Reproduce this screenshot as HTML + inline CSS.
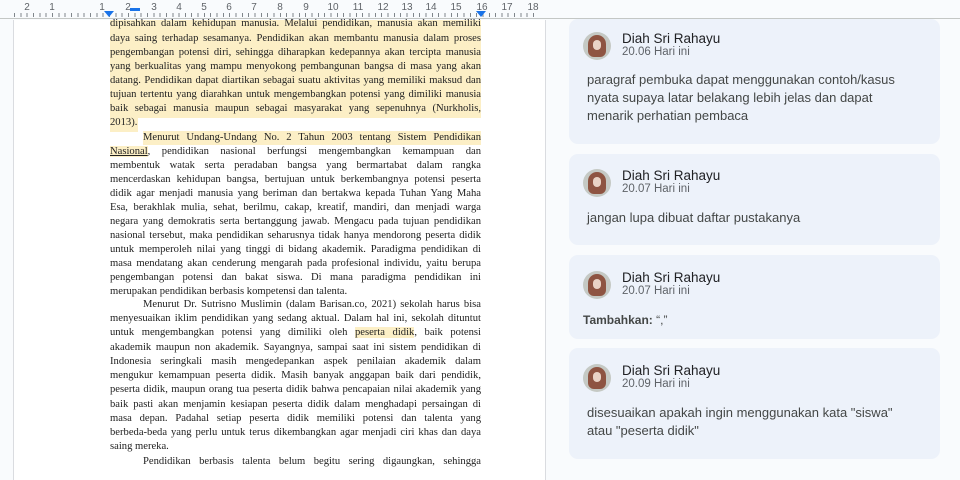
<!DOCTYPE html>
<html><head><meta charset="utf-8"><style>
*{margin:0;padding:0;box-sizing:border-box}
body{width:960px;height:472px;overflow:hidden;background:#f9fbfd;position:relative;font-family:"Liberation Serif",serif}
.ruler{position:absolute;left:0;top:0;width:960px;height:19px;background:#f9fbfd;border-bottom:1px solid #c4c7c5}
.ticks{position:absolute;left:14px;top:13px;width:521px;height:4px;background:repeating-linear-gradient(90deg,#80868b 0 1px,transparent 1px 6.33px)}
.num{position:absolute;top:2px;font:10px "Liberation Sans",sans-serif;color:#5f6368;transform:translateX(-50%);background:#f9fbfd;padding:0 1px}
.page{position:absolute;left:13px;top:20px;width:533px;height:460px;background:#fff;border-left:1px solid #dadce0;border-right:1px solid #dadce0}
.l{position:absolute;left:110px;width:371px;font-size:10.6px;line-height:14px;height:14px;color:#222;text-align:justify;text-align-last:justify;white-space:nowrap;overflow:visible}
.l.e{text-align-last:left}
.hs{background:#fcefc6}
.card{position:absolute;left:569px;width:371px;background:#edf2fa;border-radius:9px;font-family:"Liberation Sans",sans-serif}
.av{position:absolute;left:14px;width:28px;height:28px;border-radius:50%;background:#c5c9c4;overflow:hidden}
.av:before{content:"";position:absolute;left:5px;top:3px;width:18px;height:22px;border-radius:9px 9px 6px 6px;background:#8e5442}
.av:after{content:"";position:absolute;left:10px;top:8px;width:8px;height:10px;border-radius:4px;background:#e9d3c6}
.nm{position:absolute;left:53px;font-size:13.5px;color:#202124}
.tm{position:absolute;left:53px;font-size:11.5px;color:#5f6368}
.bd{position:absolute;left:18px;font-size:13px;line-height:18px;color:#444746}
</style></head><body>
<div class="page"></div>
<div class="ruler">
<div class="ticks"></div>
<span class="num" style="left:27px">2</span><span class="num" style="left:52px">1</span>
<span class="num" style="left:102px">1</span><span class="num" style="left:128px">2</span><span class="num" style="left:154px">3</span><span class="num" style="left:179px">4</span><span class="num" style="left:204px">5</span><span class="num" style="left:229px">6</span><span class="num" style="left:254px">7</span><span class="num" style="left:280px">8</span><span class="num" style="left:306px">9</span><span class="num" style="left:333px">10</span><span class="num" style="left:358px">11</span><span class="num" style="left:383px">12</span><span class="num" style="left:407px">13</span><span class="num" style="left:431px">14</span><span class="num" style="left:456px">15</span><span class="num" style="left:482px">16</span><span class="num" style="left:507px">17</span><span class="num" style="left:533px">18</span>
<div style="position:absolute;left:104px;top:11px;width:0;height:0;border-left:5px solid transparent;border-right:5px solid transparent;border-top:6px solid #1a73e8"></div>
<div style="position:absolute;left:476px;top:11px;width:0;height:0;border-left:5px solid transparent;border-right:5px solid transparent;border-top:6px solid #1a73e8"></div>
<div style="position:absolute;left:130px;top:8px;width:10px;height:3px;background:#1a73e8"></div>
</div>
<div style="position:absolute;left:110px;top:20px;width:371px;height:98px;background:#fcefc6"></div>
<div style="position:absolute;left:110px;top:118px;width:28px;height:14px;background:#fcefc6"></div>
<div style="position:absolute;left:143px;top:131px;width:338px;height:14px;background:#fcefc6"></div>
<div class="l" style="top:17px">dipisahkan dalam kehidupan manusia. Melalui pendidikan, manusia akan memiliki</div>
<div class="l" style="top:32px">daya saing terhadap sesamanya. Pendidikan akan membantu manusia dalam proses</div>
<div class="l" style="top:46px">pengembangan potensi diri, sehingga diharapkan kedepannya akan tercipta manusia</div>
<div class="l" style="top:60px">yang berkualitas yang mampu menyokong pembangunan bangsa di masa yang akan</div>
<div class="l" style="top:74px">datang. Pendidikan dapat diartikan sebagai suatu aktivitas yang memiliki maksud dan</div>
<div class="l" style="top:88px">tujuan tertentu yang diarahkan untuk mengembangkan potensi yang dimiliki manusia</div>
<div class="l" style="top:102px">baik sebagai manusia maupun sebagai masyarakat yang sepenuhnya (Nurkholis,</div>
<div class="l e" style="top:116px">2013).</div>
<div class="l" style="top:131px;left:143px;width:338px">Menurut Undang-Undang No. 2 Tahun 2003 tentang Sistem Pendidikan</div>
<div class="l" style="top:145px"><span class="hs" style="text-decoration:underline">Nasional</span>, pendidikan nasional berfungsi mengembangkan kemampuan dan</div>
<div class="l" style="top:159px">membentuk watak serta peradaban bangsa yang bermartabat dalam rangka</div>
<div class="l" style="top:173px">mencerdaskan kehidupan bangsa, bertujuan untuk berkembangnya potensi peserta</div>
<div class="l" style="top:187px">didik agar menjadi manusia yang beriman dan bertakwa kepada Tuhan Yang Maha</div>
<div class="l" style="top:201px">Esa, berakhlak mulia, sehat, berilmu, cakap, kreatif, mandiri, dan menjadi warga</div>
<div class="l" style="top:215px">negara yang demokratis serta bertanggung jawab. Mengacu pada tujuan pendidikan</div>
<div class="l" style="top:229px">nasional tersebut, maka pendidikan seharusnya tidak hanya mendorong peserta didik</div>
<div class="l" style="top:243px">untuk memperoleh nilai yang tinggi di bidang akademik. Paradigma pendidikan di</div>
<div class="l" style="top:257px">masa mendatang akan cenderung mengarah pada profesional individu, yaitu berupa</div>
<div class="l" style="top:271px">pengembangan potensi dan bakat siswa. Di mana paradigma pendidikan ini</div>
<div class="l e" style="top:285px">merupakan pendidikan berbasis kompetensi dan talenta.</div>
<div class="l" style="top:298px;left:143px;width:338px">Menurut Dr. Sutrisno Muslimin (dalam Barisan.co, 2021) sekolah harus bisa</div>
<div class="l" style="top:312px">menyesuaikan iklim pendidikan yang sedang aktual. Dalam hal ini, sekolah dituntut</div>
<div class="l" style="top:326px">untuk mengembangkan potensi yang dimiliki oleh <span class="hs">peserta didik</span>, baik potensi</div>
<div class="l" style="top:341px">akademik maupun non akademik. Sayangnya, sampai saat ini sistem pendidikan di</div>
<div class="l" style="top:355px">Indonesia seringkali masih mengedepankan aspek penilaian akademik dalam</div>
<div class="l" style="top:369px">mengukur kemampuan peserta didik. Masih banyak anggapan baik dari pendidik,</div>
<div class="l" style="top:383px">peserta didik, maupun orang tua peserta didik bahwa pencapaian nilai akademik yang</div>
<div class="l" style="top:398px">baik pasti akan menjamin kesiapan peserta didik dalam menghadapi persaingan di</div>
<div class="l" style="top:412px">masa depan. Padahal setiap peserta didik memiliki potensi dan talenta yang</div>
<div class="l" style="top:426px">berbeda-beda yang perlu untuk terus dikembangkan agar menjadi ciri khas dan daya</div>
<div class="l e" style="top:440px">saing mereka.</div>
<div class="l" style="top:455px;left:143px;width:338px">Pendidikan berbasis talenta belum begitu sering digaungkan, sehingga</div>

<div class="card" style="top:19px;height:125px">
<div class="av" style="top:13px"></div><div class="nm" style="top:12px">Diah Sri Rahayu</div><div class="tm" style="top:27px">20.06 Hari ini</div>
<div class="bd" style="top:52px">paragraf pembuka dapat menggunakan contoh/kasus<br>nyata supaya latar belakang lebih jelas dan dapat<br>menarik perhatian pembaca</div></div>
<div class="card" style="top:154px;height:91px">
<div class="av" style="top:15px"></div><div class="nm" style="top:14px">Diah Sri Rahayu</div><div class="tm" style="top:29px">20.07 Hari ini</div>
<div class="bd" style="top:55px">jangan lupa dibuat daftar pustakanya</div></div>
<div class="card" style="top:255px;height:84px">
<div class="av" style="top:16px"></div><div class="nm" style="top:15px">Diah Sri Rahayu</div><div class="tm" style="top:30px">20.07 Hari ini</div>
<div class="bd" style="top:56px;left:14px;font-size:12px"><b>Tambahkan:</b> “,”</div></div>
<div class="card" style="top:348px;height:111px">
<div class="av" style="top:16px"></div><div class="nm" style="top:15px">Diah Sri Rahayu</div><div class="tm" style="top:30px">20.09 Hari ini</div>
<div class="bd" style="top:56px">disesuaikan apakah ingin menggunakan kata "siswa"<br>atau "peserta didik"</div></div>
</body></html>
